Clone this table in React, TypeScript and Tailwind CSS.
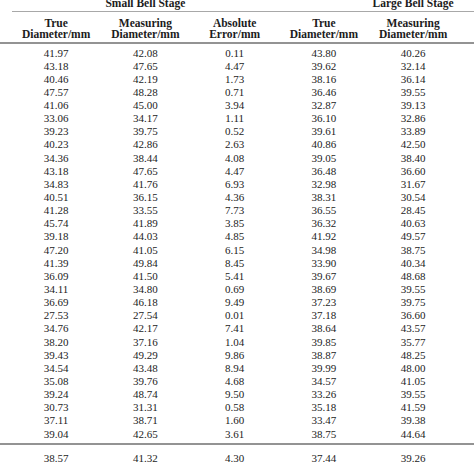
import React from 'react';

// Small bell stage: true / measured / error, large bell stage: true / measured
const smallTrue = [
  '41.97', '43.18', '40.46', '47.57', '41.06', '33.06', '39.23', '40.23', '34.36', '43.18',
  '34.83', '40.51', '41.28', '45.74', '39.18', '47.20', '41.39', '36.09', '34.11', '36.69',
  '27.53', '34.76', '38.20', '39.43', '34.54', '35.08', '39.24', '30.73', '37.11', '39.04',
];
const smallMeasured = [
  '42.08', '47.65', '42.19', '48.28', '45.00', '34.17', '39.75', '42.86', '38.44', '47.65',
  '41.76', '36.15', '33.55', '41.89', '44.03', '41.05', '49.84', '41.50', '34.80', '46.18',
  '27.54', '42.17', '37.16', '49.29', '43.48', '39.76', '48.74', '31.31', '38.71', '42.65',
];
const smallError = [
  '0.11', '4.47', '1.73', '0.71', '3.94', '1.11', '0.52', '2.63', '4.08', '4.47',
  '6.93', '4.36', '7.73', '3.85', '4.85', '6.15', '8.45', '5.41', '0.69', '9.49',
  '0.01', '7.41', '1.04', '9.86', '8.94', '4.68', '9.50', '0.58', '1.60', '3.61',
];
const largeTrue = [
  '43.80', '39.62', '38.16', '36.46', '32.87', '36.10', '39.61', '40.86', '39.05', '36.48',
  '32.98', '38.31', '36.55', '36.32', '41.92', '34.98', '33.90', '39.67', '38.69', '37.23',
  '37.18', '38.64', '39.85', '38.87', '39.99', '34.57', '33.26', '35.18', '33.47', '38.75',
];
const largeMeasured = [
  '40.26', '32.14', '36.14', '39.55', '39.13', '32.86', '33.89', '42.50', '38.40', '36.60',
  '31.67', '30.54', '28.45', '40.63', '49.57', '38.75', '40.34', '48.68', '39.55', '39.75',
  '36.60', '43.57', '35.77', '48.25', '48.00', '41.05', '39.55', '41.59', '39.38', '44.64',
];

const rows = smallTrue.map((t, i) => [t, smallMeasured[i], smallError[i], largeTrue[i], largeMeasured[i]]);

const means = ['38.57', '41.32', '4.30', '37.44', '39.26'];

const headers: [string, string][] = [
  ['True', 'Diameter/mm'],
  ['Measuring', 'Diameter/mm'],
  ['Absolute', 'Error/mm'],
  ['True', 'Diameter/mm'],
  ['Measuring', 'Diameter/mm'],
];

function Row({ cells }: { cells: string[] }) {
  return (
    <div className="flex pl-[11.5px] h-[13.15px] leading-[13.15px] text-[11px]">
      {cells.map((c, i) => (
        <div key={i} className="w-[89.25px] shrink-0 text-center">
          {c}
        </div>
      ))}
    </div>
  );
}

export default function App() {
  return (
    <div
      className="w-[474px] h-[474px] overflow-hidden bg-white text-[#1c1c1c]"
      style={{ fontFamily: '"Liberation Serif", "Times New Roman", serif' }}
    >
      <div className="w-[547px] -mt-[5px]">
        {/* stage group header */}
        <div className="ml-[11.5px] flex h-[17px] leading-[17px] border-b border-[#a8a8a8] text-[11.5px] font-bold">
          <div className="w-[267.75px] shrink-0 text-center">Small Bell Stage</div>
          <div className="w-[267.75px] shrink-0 text-center">Large Bell Stage</div>
        </div>

        {/* column headers */}
        <div className="flex pl-[11.5px] pt-[6px] pb-[1.5px] border-b-2 border-[#939393] text-[11.5px] leading-[11px] font-bold">
          {headers.map(([a, b], i) => (
            <div key={i} className="w-[89.25px] shrink-0 text-center">
              {a}
              <br />
              {b}
            </div>
          ))}
        </div>

        {/* data */}
        <div className="pt-[3px] pb-[2px] border-b-2 border-[#939393]">
          {rows.map((r, i) => (
            <Row key={i} cells={r} />
          ))}
        </div>

        {/* mean */}
        <div className="pt-[7.4px]">
          <Row cells={means} />
        </div>
      </div>
    </div>
  );
}
